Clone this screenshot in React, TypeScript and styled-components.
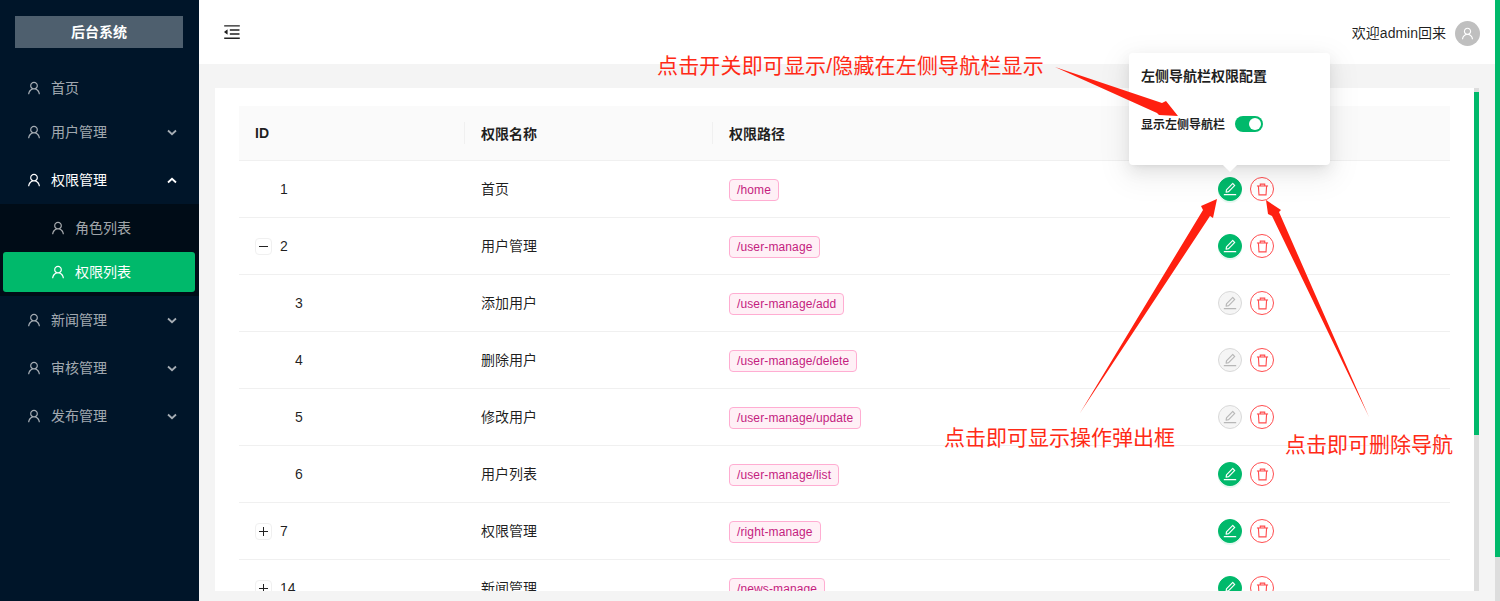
import React from 'react';
import styled, { createGlobalStyle } from 'styled-components';
import { AiOutlineUser, AiOutlineEdit, AiOutlineMenuFold } from 'react-icons/ai';

const FONT = '"Liberation Sans", "Noto Sans CJK SC", sans-serif';

const GlobalStyle = createGlobalStyle`
  html, body {
    margin: 0;
    padding: 0;
    height: 601px;
    overflow: hidden;
    background: #f4f4f4;
    font-family: ${FONT};
    font-size: 14px;
    color: rgba(0, 0, 0, 0.88);
  }
`;

const Page = styled.div`
  position: relative;
  display: flex;
  width: 1500px;
  height: 601px;
  overflow: hidden;
`;

const Sidebar = styled.aside`
  flex: 0 0 199px;
  display: flex;
  flex-direction: column;
  background: #001529;
`;

const Logo = styled.div`
  flex: 0 0 32px;
  margin: 16px 16px 16px 15px;
  background: #4e5f6e;
  color: #fff;
  font-size: 14px;
  font-weight: 700;
  line-height: 32px;
  text-align: center;
`;

const MenuItem = styled.div<{ $active?: boolean; $sub?: boolean; $selected?: boolean; $first?: boolean }>`
  flex: 0 0 40px;
  display: flex;
  align-items: center;
  margin: ${p => (p.$sub ? '0' : p.$first ? '4px 0 0' : '4px 0')};
  margin-right: ${p => (p.$selected ? '4px' : '0')};
  margin-left: ${p => (p.$selected ? '3px' : '0')};
  padding-left: ${p => (p.$selected ? '47px' : p.$sub ? '50px' : '26px')};
  padding-right: 22px;
  border-radius: 3px;
  background: ${p => (p.$selected ? '#00b96b' : 'transparent')};
  color: ${p => (p.$active || p.$selected ? '#fff' : 'rgba(255, 255, 255, 0.65)')};
  svg.user {
    font-size: 16px;
    margin-right: 9px;
  }
`;

const MenuLabel = styled.span`
  flex: 1;
  padding-bottom: 2px;
`;

const SubMenu = styled.div`
  flex: 0 0 92px;
  display: flex;
  flex-direction: column;
  gap: 4px;
  box-sizing: border-box;
  padding: 4px 0;
  background: #000c17;
`;

const Main = styled.main`
  flex: 1;
  display: flex;
  flex-direction: column;
  min-width: 0;
`;

const Header = styled.header`
  flex: 0 0 64px;
  display: flex;
  align-items: center;
  padding: 0 15px 0 23px;
  background: #fff;
  svg {
    font-size: 20px;
    color: #222;
  }
`;

const Spacer = styled.div`
  flex: 1;
`;

const Welcome = styled.span`
  margin-right: 9px;
`;

const Avatar = styled.div`
  display: flex;
  align-items: center;
  justify-content: center;
  width: 25px;
  height: 25px;
  margin-top: 3px;
  border-radius: 50%;
  background: #bfbfbf;
  svg {
    font-size: 15px;
    color: #fff;
  }
`;

const Content = styled.div`
  display: flex;
  height: 503px;
  margin: 24px 16px 10px;
  background: #fff;
`;

const CardBody = styled.div`
  flex: 1;
  min-width: 0;
  padding: 18px 24px 0;
  overflow: hidden;
`;

const Table = styled.table`
  width: 1211px;
  table-layout: fixed;
  border-collapse: separate;
  border-spacing: 0;
`;

const Th = styled.th<{ $width: number }>`
  position: relative;
  width: ${p => p.$width}px;
  height: 55px;
  box-sizing: border-box;
  padding: 0 16px;
  background: #fafafa;
  border-bottom: 1px solid #f0f0f0;
  font-weight: 600;
  text-align: left;
  &:not(:last-child)::before {
    content: '';
    position: absolute;
    top: 16px;
    right: 0;
    width: 1px;
    height: 22px;
    background: #f0f0f0;
  }
`;

const Td = styled.td`
  height: 57px;
  box-sizing: border-box;
  padding: 0 16px;
  border-bottom: 1px solid #f0f0f0;
`;

const CellText = styled.span`
  display: block;
  padding-bottom: 2px;
`;

const IdCell = styled.div<{ $indent: number }>`
  display: flex;
  align-items: center;
  padding-left: ${p => p.$indent}px;
`;

const ExpandBox = styled.span<{ $open?: boolean }>`
  position: relative;
  flex: 0 0 17px;
  box-sizing: border-box;
  height: 17px;
  margin-right: 8px;
  border: 1px solid #f0f0f0;
  border-radius: 4px;
  background: #fff;
  &::before {
    content: '';
    position: absolute;
    top: 7px;
    left: 3px;
    width: 9px;
    height: 1px;
    background: #222;
  }
  &::after {
    content: '';
    display: ${p => (p.$open ? 'none' : 'block')};
    position: absolute;
    top: 3px;
    left: 7px;
    width: 1px;
    height: 9px;
    background: #222;
  }
`;

const ExpandGap = styled.span`
  flex: 0 0 25px;
`;

const Tag = styled.span`
  display: block;
  width: fit-content;
  box-sizing: border-box;
  height: 22px;
  margin-top: 2px;
  padding: 0 7px;
  border: 1px solid #ffadd2;
  border-radius: 4px;
  background: #fff0f6;
  color: #c41d7f;
  font-size: 12px;
  letter-spacing: 0.12px;
  line-height: 21px;
`;

const Actions = styled.div`
  display: flex;
  gap: 8px;
`;

type RoundTone = 'primary' | 'disabled' | 'danger';

const toneStyles: Record<RoundTone, string> = {
  primary: 'background: #00b96b; border-color: #00b96b; color: #fff; box-shadow: 0 2px 0 rgba(0, 185, 107, 0.1);',
  disabled: 'background: #f5f5f5; border-color: #d9d9d9; color: rgba(0, 0, 0, 0.25);',
  danger: 'background: #fff; border-color: #ff4d4f; color: #ff4d4f;',
};

const RoundButton = styled.button<{ $tone: RoundTone }>`
  display: flex;
  align-items: center;
  justify-content: center;
  box-sizing: border-box;
  width: 24px;
  height: 24px;
  padding: 0;
  border: 1px solid;
  border-radius: 50%;
  font-size: 16px;
  ${p => toneStyles[p.$tone]}
`;

const CardScroll = styled.div`
  flex: 0 0 5px;
  padding-top: 4px;
  box-sizing: border-box;
  background: #dddddd;
`;

const CardThumb = styled.div`
  height: 343px;
  background: #00b96b;
`;

const PageScroll = styled.div`
  flex: 0 0 5px;
  background: #dddddd;
`;

const PageThumb = styled.div`
  height: 557px;
  background: #00b96b;
`;

const Popover = styled.div`
  position: absolute;
  top: 53px;
  left: 1129px;
  box-sizing: border-box;
  width: 201px;
  height: 112px;
  padding: 13px 12px;
  border-radius: 4px;
  background: #fff;
  box-shadow: 0 6px 16px rgba(0, 0, 0, 0.08), 0 3px 6px -4px rgba(0, 0, 0, 0.12), 0 9px 28px 8px rgba(0, 0, 0, 0.05);
  &::after {
    content: '';
    position: absolute;
    left: 96px;
    bottom: -5px;
    width: 10px;
    height: 10px;
    background: #fff;
    transform: rotate(45deg);
  }
`;

const PopoverTitle = styled.div`
  font-size: 14px;
  font-weight: 600;
  line-height: 20px;
`;

const PopoverRow = styled.div`
  display: flex;
  align-items: center;
  gap: 10px;
  margin-top: 29px;
  font-size: 12px;
  font-weight: 600;
`;

const Switch = styled.span`
  position: relative;
  width: 28px;
  height: 16px;
  border-radius: 8px;
  background: #00b96b;
  &::after {
    content: '';
    position: absolute;
    top: 2px;
    right: 2px;
    width: 12px;
    height: 12px;
    border-radius: 50%;
    background: #fff;
  }
`;

const ArrowLayer = styled.svg`
  position: absolute;
  inset: 0;
  pointer-events: none;
`;

const Note = styled.div<{ $left: number; $top: number; $tracking?: number }>`
  position: absolute;
  left: ${p => p.$left}px;
  top: ${p => p.$top}px;
  color: #ff2a16;
  font-size: 21px;
  letter-spacing: ${p => p.$tracking ?? 0}px;
  line-height: 28px;
  white-space: nowrap;
`;

const Chevron: React.FC<{ up?: boolean }> = ({ up }) => (
  <svg width="10" height="7" viewBox="0 0 10 7" style={{ transform: up ? 'rotate(180deg)' : undefined }}>
    <path d="M1 1.5 L5 5.2 L9 1.5" fill="none" stroke="currentColor" strokeWidth="1.8" />
  </svg>
);

// antd's delete icon has inner lines, the one in this screen is a plain bucket
const TrashIcon: React.FC = () => (
  <svg width="13" height="13" viewBox="0 0 14 14" fill="none" stroke="currentColor" strokeWidth="1.2" style={{ marginTop: 1 }}>
    <path d="M1 3.2 H13" />
    <path d="M4.6 3.2 V1.2 H9.4 V3.2" />
    <path d="M2.6 3.2 L3.2 12.8 H10.8 L11.4 3.2" />
  </svg>
);

type Row = {
  id: number;
  name: string;
  path: string;
  expand?: 'open' | 'closed';
  child?: boolean;
  disabled?: boolean;
};

const rows: Row[] = [
  { id: 1, name: '首页', path: '/home' },
  { id: 2, name: '用户管理', path: '/user-manage', expand: 'open' },
  { id: 3, name: '添加用户', path: '/user-manage/add', child: true, disabled: true },
  { id: 4, name: '删除用户', path: '/user-manage/delete', child: true, disabled: true },
  { id: 5, name: '修改用户', path: '/user-manage/update', child: true, disabled: true },
  { id: 6, name: '用户列表', path: '/user-manage/list', child: true },
  { id: 7, name: '权限管理', path: '/right-manage', expand: 'closed' },
  { id: 14, name: '新闻管理', path: '/news-manage', expand: 'closed' },
];

const App: React.FC = () => (
  <Page>
    <GlobalStyle />
    <Sidebar>
      <Logo>后台系统</Logo>
      <MenuItem $first><AiOutlineUser className="user" /><MenuLabel>首页</MenuLabel></MenuItem>
      <MenuItem><AiOutlineUser className="user" /><MenuLabel>用户管理</MenuLabel><Chevron /></MenuItem>
      <MenuItem $active><AiOutlineUser className="user" /><MenuLabel>权限管理</MenuLabel><Chevron up /></MenuItem>
      <SubMenu>
        <MenuItem $sub><AiOutlineUser className="user" /><MenuLabel>角色列表</MenuLabel></MenuItem>
        <MenuItem $sub $selected><AiOutlineUser className="user" /><MenuLabel>权限列表</MenuLabel></MenuItem>
      </SubMenu>
      <MenuItem><AiOutlineUser className="user" /><MenuLabel>新闻管理</MenuLabel><Chevron /></MenuItem>
      <MenuItem><AiOutlineUser className="user" /><MenuLabel>审核管理</MenuLabel><Chevron /></MenuItem>
      <MenuItem><AiOutlineUser className="user" /><MenuLabel>发布管理</MenuLabel><Chevron /></MenuItem>
    </Sidebar>
    <Main>
      <Header>
        <AiOutlineMenuFold />
        <Spacer />
        <Welcome>欢迎admin回来</Welcome>
        <Avatar><AiOutlineUser /></Avatar>
      </Header>
      <Content>
        <CardBody>
          <Table>
            <thead>
              <tr>
                <Th $width={226}>ID</Th>
                <Th $width={248}>权限名称</Th>
                <Th $width={489}>权限路径</Th>
                <Th $width={248}>操作</Th>
              </tr>
            </thead>
            <tbody>
              {rows.map(row => (
                <tr key={row.id}>
                  <Td>
                    <IdCell $indent={row.child ? 15 : 0}>
                      {row.expand ? <ExpandBox $open={row.expand === 'open'} /> : <ExpandGap />}
                      {row.id}
                    </IdCell>
                  </Td>
                  <Td><CellText>{row.name}</CellText></Td>
                  <Td><Tag>{row.path}</Tag></Td>
                  <Td>
                    <Actions>
                      <RoundButton $tone={row.disabled ? 'disabled' : 'primary'}><AiOutlineEdit /></RoundButton>
                      <RoundButton $tone="danger"><TrashIcon /></RoundButton>
                    </Actions>
                  </Td>
                </tr>
              ))}
            </tbody>
          </Table>
        </CardBody>
        <CardScroll><CardThumb /></CardScroll>
      </Content>
    </Main>
    <PageScroll><PageThumb /></PageScroll>

    <Popover>
      <PopoverTitle>左侧导航栏权限配置</PopoverTitle>
      <PopoverRow>显示左侧导航栏<Switch /></PopoverRow>
    </Popover>

    <ArrowLayer width="1500" height="601" viewBox="0 0 1500 601">
      <g fill="#ff2010">
        <polygon points="1055,67 1162,103 1166,101 1178,116 1159,115 1157,113" />
        <polygon points="1080,413 1203,210 1201,206 1217,199 1213,218 1210,216" />
        <polygon points="1369,417 1272,216 1268,214 1266,200 1281,210 1279,212" />
      </g>
    </ArrowLayer>
    <Note $left={657} $top={52} $tracking={0.16}>点击开关即可显示/隐藏在左侧导航栏显示</Note>
    <Note $left={944} $top={424}>点击即可显示操作弹出框</Note>
    <Note $left={1285} $top={431}>点击即可删除导航</Note>
  </Page>
);

export default App;
